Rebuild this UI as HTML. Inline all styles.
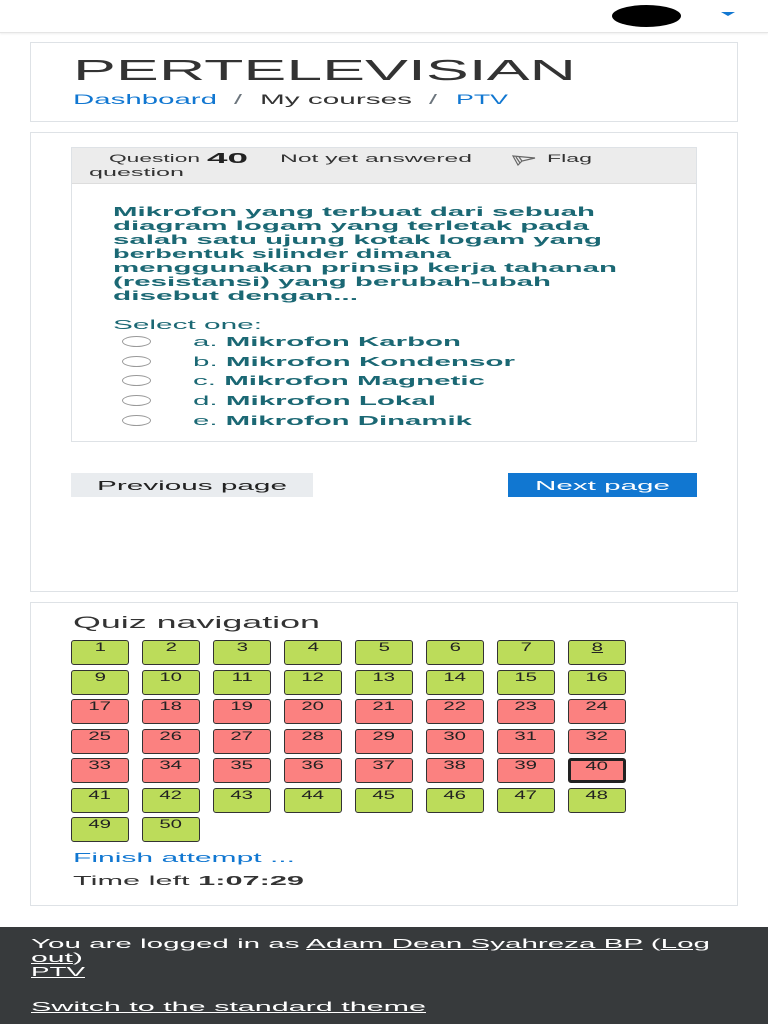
<!DOCTYPE html>
<html><head><meta charset="utf-8"><style>
body{margin:0;width:768px;height:1024px;position:relative;background:#fff;font-family:"Liberation Sans",sans-serif;overflow:hidden}
.t{position:absolute;white-space:nowrap;overflow:visible}
.t span{display:inline-block;transform-origin:0 0}
.box{position:absolute;border:1px solid #dee2e6;box-sizing:border-box;background:#fff}
.q{position:absolute;width:58px;height:25px;border:1px solid #333;border-radius:3px;box-sizing:border-box;font-size:12px;text-align:center;line-height:12px;color:#222}
.g{background:#bcdc5a}.r{background:#fb8180}
.rad{position:absolute;left:122px;width:27px;height:9px;border:1.5px solid #999;border-radius:50%}
</style></head><body>
<div style="position:absolute;left:0;top:0;width:768px;height:32px;border-bottom:1px solid #e5e5e5;box-shadow:0 1px 2px #eee"></div>
<div style="position:absolute;left:612px;top:5px;width:69px;height:22px;border-radius:50%;background:#000"></div>
<div style="position:absolute;left:721px;top:12px;width:0;height:0;border-left:7px solid transparent;border-right:7px solid transparent;border-top:4px solid #1177d1"></div>

<div class="box" style="left:30px;top:42px;width:708px;height:80px"></div>
<div class="t" style="left:73px;top:55px;width:503px;font-size:29px;color:#333"><span>PERTELEVISIAN</span></div>
<div class="t" style="left:73px;top:91px;width:144px;font-size:14px;color:#1177d1"><span>Dashboard</span></div>
<div class="t" style="left:234px;top:91px;width:8px;font-size:14px;color:#6c757d"><span>/</span></div>
<div class="t" style="left:260px;top:91px;width:152px;font-size:14px;color:#333"><span>My courses</span></div>
<div class="t" style="left:429px;top:91px;width:8px;font-size:14px;color:#6c757d"><span>/</span></div>
<div class="t" style="left:456px;top:91px;width:52px;font-size:14px;color:#1177d1"><span>PTV</span></div>

<div class="box" style="left:30px;top:132px;width:708px;height:460px"></div>
<div class="box" style="left:71px;top:147px;width:626px;height:295px"></div>
<div style="position:absolute;left:72px;top:148px;width:624px;height:35px;background:#ececec;border-bottom:1px solid #ddd"></div>
<div class="t" style="left:109px;top:153px;width:91px;font-size:11px;color:#333"><span>Question</span></div>
<div class="t" style="left:207px;top:150px;width:41px;font-size:15px;font-weight:bold;color:#222"><span>40</span></div>
<div class="t" style="left:280px;top:153px;width:192px;font-size:11px;color:#333"><span>Not yet answered</span></div>
<svg style="position:absolute;left:512px;top:154px" width="24" height="12" viewBox="0 0 24 12"><path d="M1 2 L23 4 L10 7 L6 11 Z M4 3 L8 9 M7 3 L10 7" fill="none" stroke="#666" stroke-width="1.2"/></svg>
<div class="t" style="left:547px;top:153px;width:45px;font-size:11px;color:#333"><span>Flag</span></div>
<div class="t" style="left:89px;top:167px;width:95px;font-size:11px;color:#333"><span>question</span></div>

<div class="t" style="left:113px;top:204px;width:482px;font-size:13px;font-weight:bold;color:#1b6874"><span>Mikrofon yang terbuat dari sebuah</span></div>
<div class="t" style="left:113px;top:218px;width:476px;font-size:13px;font-weight:bold;color:#1b6874"><span>diagram logam yang terletak pada</span></div>
<div class="t" style="left:113px;top:232px;width:489px;font-size:13px;font-weight:bold;color:#1b6874"><span>salah satu ujung kotak logam yang</span></div>
<div class="t" style="left:113px;top:246px;width:338px;font-size:13px;font-weight:bold;color:#1b6874"><span>berbentuk silinder dimana</span></div>
<div class="t" style="left:113px;top:260px;width:504px;font-size:13px;font-weight:bold;color:#1b6874"><span>menggunakan prinsip kerja tahanan</span></div>
<div class="t" style="left:113px;top:274px;width:438px;font-size:13px;font-weight:bold;color:#1b6874"><span>(resistansi) yang berubah-ubah</span></div>
<div class="t" style="left:113px;top:288px;width:245px;font-size:13px;font-weight:bold;color:#1b6874"><span>disebut dengan...</span></div>
<div class="t" style="left:113px;top:317px;width:149px;font-size:13px;color:#1b6874"><span>Select one:</span></div>

<div class="rad" style="top:336px"></div>
<div class="rad" style="top:356px"></div>
<div class="rad" style="top:375px"></div>
<div class="rad" style="top:395px"></div>
<div class="rad" style="top:415px"></div>
<div class="t" style="left:193px;top:334px;width:268px;font-size:13px;font-weight:bold;color:#1b6874"><span><span style="font-weight:normal;transform:none">a.&nbsp;</span>Mikrofon Karbon</span></div>
<div class="t" style="left:193px;top:354px;width:322px;font-size:13px;font-weight:bold;color:#1b6874"><span><span style="font-weight:normal;transform:none">b.&nbsp;</span>Mikrofon Kondensor</span></div>
<div class="t" style="left:193px;top:373px;width:292px;font-size:13px;font-weight:bold;color:#1b6874"><span><span style="font-weight:normal;transform:none">c.&nbsp;</span>Mikrofon Magnetic</span></div>
<div class="t" style="left:193px;top:393px;width:243px;font-size:13px;font-weight:bold;color:#1b6874"><span><span style="font-weight:normal;transform:none">d.&nbsp;</span>Mikrofon Lokal</span></div>
<div class="t" style="left:193px;top:413px;width:279px;font-size:13px;font-weight:bold;color:#1b6874"><span><span style="font-weight:normal;transform:none">e.&nbsp;</span>Mikrofon Dinamik</span></div>

<div style="position:absolute;left:71px;top:473px;width:242px;height:24px;background:#e9ecef"></div>
<div class="t" style="left:97px;top:478px;width:190px;font-size:13px;color:#222"><span>Previous page</span></div>
<div style="position:absolute;left:508px;top:473px;width:189px;height:24px;background:#1177d1"></div>
<div class="t" style="left:535px;top:478px;width:135px;font-size:13px;color:#fff"><span>Next page</span></div>

<div class="box" style="left:30px;top:602px;width:708px;height:304px"></div>
<div class="t" style="left:73px;top:613px;width:247px;font-size:17px;color:#333"><span>Quiz navigation</span></div>
<div id="grid"></div>
<div class="t" style="left:73px;top:850px;width:222px;font-size:13px;color:#1177d1"><span>Finish attempt ...</span></div>
<div class="t" style="left:73px;top:873px;width:231px;font-size:13px;color:#333"><span>Time left <b>1:07:29</b></span></div>

<div style="position:absolute;left:0;top:927px;width:768px;height:97px;background:#373a3c"></div>
<div class="t" style="left:31px;top:936px;width:679px;font-size:13px;color:#fff"><span>You are logged in as <u>Adam Dean Syahreza BP</u> (<u>Log</u></span></div>
<div class="t" style="left:31px;top:950px;width:52px;font-size:13px;color:#fff"><span><u>out</u>)</span></div>
<div class="t" style="left:31px;top:964px;width:54px;font-size:13px;color:#fff"><span><u>PTV</u></span></div>
<div class="t" style="left:31px;top:999px;width:395px;font-size:13px;color:#fff"><span><u>Switch to the standard theme</u></span></div>

<script>
var g=document.getElementById('grid'),h='';
for(var i=1;i<=50;i++){var c=(i-1)%8,r=Math.floor((i-1)/8);
var cls=(i>=17&&i<=40)?'r':'g';
var st=i==40?'border:3px solid #222;line-height:10px;':'';
h+='<div class="q '+cls+'" style="left:'+(71+c*71)+'px;top:'+(640+r*29.5)+'px;'+st+'"><span style="display:inline-block;transform:scaleX(1.7)">'+(i==8?'<u>8</u>':i)+'</span></div>';}
g.innerHTML=h;
document.querySelectorAll('.t').forEach(function(d){var s=d.firstElementChild;var w=parseFloat(d.style.width);var n=s.getBoundingClientRect().width;if(n>0)s.style.transform='scaleX('+(w/n)+')';});
</script>
</body></html>
